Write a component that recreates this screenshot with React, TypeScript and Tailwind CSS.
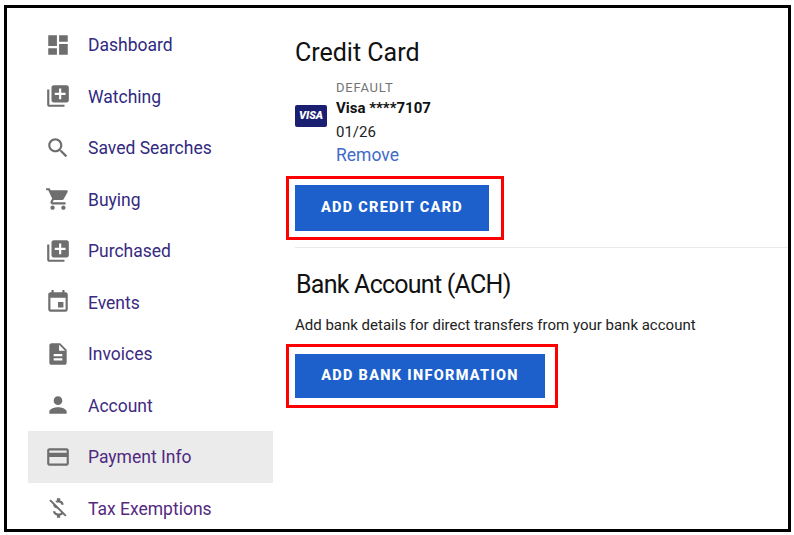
const navItems = [
  { label: "Dashboard", color: "text-[#2f2a80]", d: "M3 13h8V3H3v10zm0 8h8v-6H3v6zm10 0h8V11h-8v10zm0-18v6h8V3h-8z" },
  { label: "Watching", color: "text-[#2f2a80]", d: "M4 6H2v14c0 1.1.9 2 2 2h14v-2H4V6zm16-4H8c-1.1 0-2 .9-2 2v12c0 1.1.9 2 2 2h12c1.1 0 2-.9 2-2V4c0-1.1-.9-2-2-2zm-1 9h-4v4h-2v-4H9V9h4V5h2v4h4v2z" },
  { label: "Saved Searches", color: "text-[#312a80]", d: "M15.5 14h-.79l-.28-.27C15.41 12.59 16 11.11 16 9.5 16 5.91 13.09 3 9.5 3S3 5.91 3 9.5 5.91 16 9.5 16c1.61 0 3.09-.59 4.23-1.57l.27.28v.79l5 4.99L20.49 19l-4.99-5zm-6 0C7.01 14 5 11.99 5 9.5S7.01 5 9.5 5 14 7.01 14 9.5 11.99 14 9.5 14z" },
  { label: "Buying", color: "text-[#342a80]", d: "M7 18c-1.1 0-1.99.9-1.99 2S5.9 22 7 22s2-.9 2-2-.9-2-2-2zM1 2v2h2l3.6 7.59-1.35 2.45c-.16.28-.25.61-.25.96 0 1.1.9 2 2 2h12v-2H7.42c-.14 0-.25-.11-.25-.25l.03-.12.9-1.63h7.45c.75 0 1.41-.41 1.75-1.03l3.58-6.49c.08-.14.12-.31.12-.48 0-.55-.45-1-1-1H5.21l-.94-2H1zm16 16c-1.1 0-1.99.9-1.99 2s.89 2 1.99 2 2-.9 2-2-.9-2-2-2z" },
  { label: "Purchased", color: "text-[#372a80]", d: "M4 6H2v14c0 1.1.9 2 2 2h14v-2H4V6zm16-4H8c-1.1 0-2 .9-2 2v12c0 1.1.9 2 2 2h12c1.1 0 2-.9 2-2V4c0-1.1-.9-2-2-2zm-1 9h-4v4h-2v-4H9V9h4V5h2v4h4v2z" },
  { label: "Events", color: "text-[#3a2a80]", d: "M17 12h-5v5h5v-5zM16 1v2H8V1H6v2H5c-1.11 0-1.99.9-1.99 2L3 19c0 1.1.89 2 2 2h14c1.1 0 2-.9 2-2V5c0-1.1-.9-2-2-2h-1V1h-2zm3 18H5V8h14v11z" },
  { label: "Invoices", color: "text-[#3d2a80]", d: "M14 2H6c-1.1 0-1.99.9-1.99 2L4 20c0 1.1.89 2 1.99 2H18c1.1 0 2-.9 2-2V8l-6-6zm2 16H8v-2h8v2zm0-4H8v-2h8v2zm-3-5V3.5L18.5 9H13z" },
  { label: "Account", color: "text-[#402a80]", d: "M12 12c2.21 0 4-1.79 4-4s-1.79-4-4-4-4 1.79-4 4 1.79 4 4 4zm0 2c-2.67 0-8 1.34-8 4v2h16v-2c0-2.66-5.33-4-8-4z" },
  { label: "Payment Info", color: "text-[#4f2a80]", active: true, d: "M20 4H4c-1.11 0-1.99.89-1.99 2L2 18c0 1.11.89 2 2 2h16c1.11 0 2-.89 2-2V6c0-1.11-.89-2-2-2zm0 14H4v-6h16v6zm0-10H4V6h16v2z" },
  { label: "Tax Exemptions", color: "text-[#532a80]", d: "M12.5 6.9c1.78 0 2.44.85 2.5 2.1h2.21c-.07-1.72-1.12-3.3-3.21-3.81V3h-3v2.16c-.53.12-1.03.3-1.48.54l1.47 1.47c.41-.17.91-.27 1.51-.27zM5.33 4.06L4.06 5.33 7.5 8.77c0 2.08 1.56 3.21 3.91 3.91l3.51 3.51c-.34.48-1.05.91-2.42.91-2.06 0-2.87-.92-2.98-2.1h-2.2c.12 2.19 1.76 3.42 3.68 3.83V21h3v-2.15c.96-.18 1.82-.55 2.45-1.12l2.22 2.22 1.27-1.27L5.33 4.06z" },
];

export default function App() {
  return (
    <div className="h-[535px] w-[794px] overflow-hidden bg-white pl-1 pr-[3px] pt-[5px] pb-[3px] font-['Roboto',sans-serif]">
      <div className="flex h-full w-full overflow-hidden border-[3px] border-black">
        {/* sidebar */}
        <nav className="ml-[21px] mt-[11px] w-[245px] shrink-0">
          {navItems.map((item) => (
            <div
              key={item.label}
              className={`flex h-[51.5px] items-center pl-[17px] ${item.active ? "bg-[#ebebeb]" : ""}`}
            >
              <svg viewBox="0 0 24 24" className="h-[26px] w-[26px] shrink-0 fill-[#6e6e6e]">
                <path d={item.d} />
              </svg>
              <span className={`ml-[17px] pt-px text-[17.5px] ${item.color}`}>{item.label}</span>
            </div>
          ))}
        </nav>

        {/* main */}
        <main className="ml-[22px] flex-1">
          <h2 className="mt-[30px] text-[25px] leading-[30px] text-[#111]">Credit Card</h2>
          <div className="mt-[11px] flex items-start">
            <div className="mt-[26px] flex h-[22px] w-8 items-center justify-center rounded-[2px] bg-[#1a1f71] text-[11px] font-black italic text-white">
              VISA
            </div>
            <div className="ml-[9px]">
              <div className="text-[13px] leading-[18px] tracking-[0.8px] text-[#737373]">DEFAULT</div>
              <div className="text-[15px] font-bold leading-[22px] text-[#111]">Visa ****7107</div>
              <div className="mt-[2px] text-[15px] leading-[22px] text-[#222]">01/26</div>
              <div className="-mt-px text-[17.5px] leading-[26px] text-[#3f6bc9]">Remove</div>
            </div>
          </div>

          <div className="-ml-[9px] mt-[8px] inline-block border-[3px] border-[#f00] pb-[6px] pl-[6px] pr-3 pt-[6px]">
            <button className="block h-[46px] w-[194px] bg-[#1d60cc] text-center text-[14.5px] font-extrabold tracking-[1.25px] text-white">
              ADD CREDIT CARD
            </button>
          </div>

          <div className="mt-[7px] border-t border-[#ebebeb]" />

          <h2 className="ml-px mt-[22px] text-[25px] leading-[30px] tracking-[-0.75px] text-[#111]">Bank Account (ACH)</h2>
          <p className="mt-[14px] text-[15px] leading-[22px] text-[#222]">
            Add bank details for direct transfers from your bank account
          </p>
          <div className="-ml-[9px] mt-[8px] inline-block border-[3px] border-[#f00] py-[7px] pl-[6px] pr-[10px]">
            <button className="block h-[44px] w-[250px] bg-[#1d60cc] text-center text-[14.5px] font-extrabold tracking-[1.3px] text-white">
              ADD BANK INFORMATION
            </button>
          </div>
        </main>
      </div>
    </div>
  );
}
